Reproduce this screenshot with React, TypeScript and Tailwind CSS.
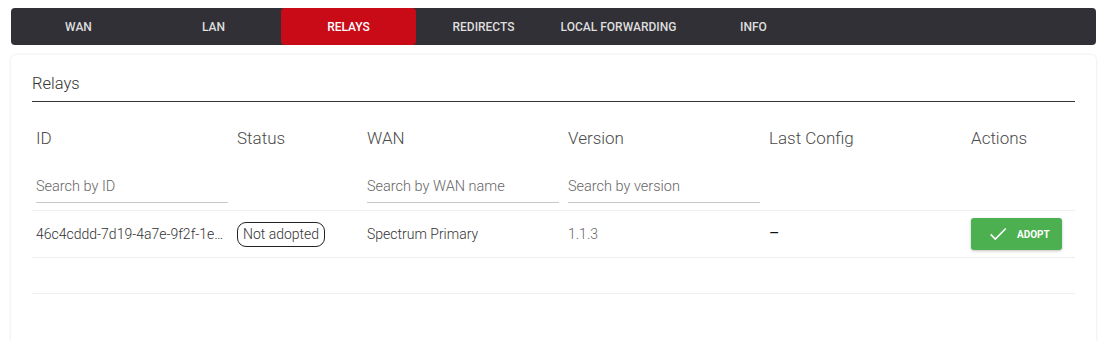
const tabs = ["WAN", "LAN", "RELAYS", "REDIRECTS", "LOCAL FORWARDING", "INFO"];

function CheckIcon() {
  return (
    <svg viewBox="0 0 24 24" className="w-[22px] h-[22px]" fill="none" stroke="currentColor" strokeWidth="1.8">
      <path d="M4 12.5l5 5L20.5 6" />
    </svg>
  );
}

function SearchInput({ placeholder }: { placeholder: string }) {
  return (
    <input
      placeholder={placeholder}
      className="w-[192px] h-[32px] border-b border-[#c8c8c8] bg-transparent outline-none text-[14.5px] font-light text-[#333] placeholder:text-[#666]"
    />
  );
}

export default function App() {
  const cols = ["w-[201px]", "w-[130px]", "w-[201px]", "w-[201px]", "w-[202px]", "flex-1"];
  const heads = ["ID", "Status", "WAN", "Version", "Last Config", "Actions"];

  return (
    <div className="min-h-screen bg-white pt-2 px-[11px] pr-[5px] font-['Roboto','Liberation_Sans',sans-serif]">
      <nav className="flex h-[37px] bg-[#313036] rounded-[4px]">
        {tabs.map((t) => (
          <div
            key={t}
            className={`w-[135px] flex items-center justify-center text-[12px] font-medium rounded-[4px] ${
              t === "RELAYS" ? "bg-[#c90a17] text-white" : "text-[#dedede]"
            }`}
          >
            {t}
          </div>
        ))}
      </nav>

      <section className="mt-[10px] bg-white rounded-[5px] shadow-[0_0_3px_rgba(0,0,0,0.13)] px-[21px] pb-10 min-h-[300px]">
        <h2 className="pt-[17px] pb-[5px] text-[16.5px] leading-6 font-light text-[#333] border-b border-[#333]">Relays</h2>

        <div className="flex pt-[24px] text-[17px] leading-6 font-light text-[#4a4a4a]">
          {heads.map((h, i) => (
            <div key={h} className={`${cols[i]} pl-[4px]`}>{h}</div>
          ))}
        </div>

        <div className="flex mt-[21px] pb-[7px] border-b border-[#eee]">
          <div className={`${cols[0]} pl-[4px]`}><SearchInput placeholder="Search by ID" /></div>
          <div className={cols[1]} />
          <div className={`${cols[2]} pl-[4px]`}><SearchInput placeholder="Search by WAN name" /></div>
          <div className={`${cols[3]} pl-[4px]`}><SearchInput placeholder="Search by version" /></div>
          <div className={cols[4]} />
          <div className={cols[5]} />
        </div>

        <div className="flex items-center h-[47px] border-b border-[#eee] text-[14px] font-light text-[#333]">
          <div className={`${cols[0]} pl-[4px] truncate pr-[4px]`}>46c4cddd-7d19-4a7e-9f2f-1e4b</div>
          <div className={`${cols[1]} pl-[4px]`}>
            <span className="inline-block border border-[#222] rounded-[9px] px-[5px] leading-[23px] text-[#333]">Not adopted</span>
          </div>
          <div className={`${cols[2]} pl-[4px]`}>Spectrum Primary</div>
          <div className={`${cols[3]} pl-[4px] text-[#666]`}>1.1.3</div>
          <div className={`${cols[4]} pl-[4px] text-[#111] font-normal text-[16px]`}>–</div>
          <div className={`${cols[5]} pl-[4px]`}>
            <button className="flex items-center gap-[8px] w-[91px] h-[32px] pl-[16px] bg-[#4caf50] text-white rounded-[3px] shadow-[0_1px_3px_rgba(0,0,0,0.25)]">
              <CheckIcon />
              <span className="text-[10px] font-bold">ADOPT</span>
            </button>
          </div>
        </div>

        <div className="h-[36px] border-b border-[#eee]" />
      </section>
    </div>
  );
}
